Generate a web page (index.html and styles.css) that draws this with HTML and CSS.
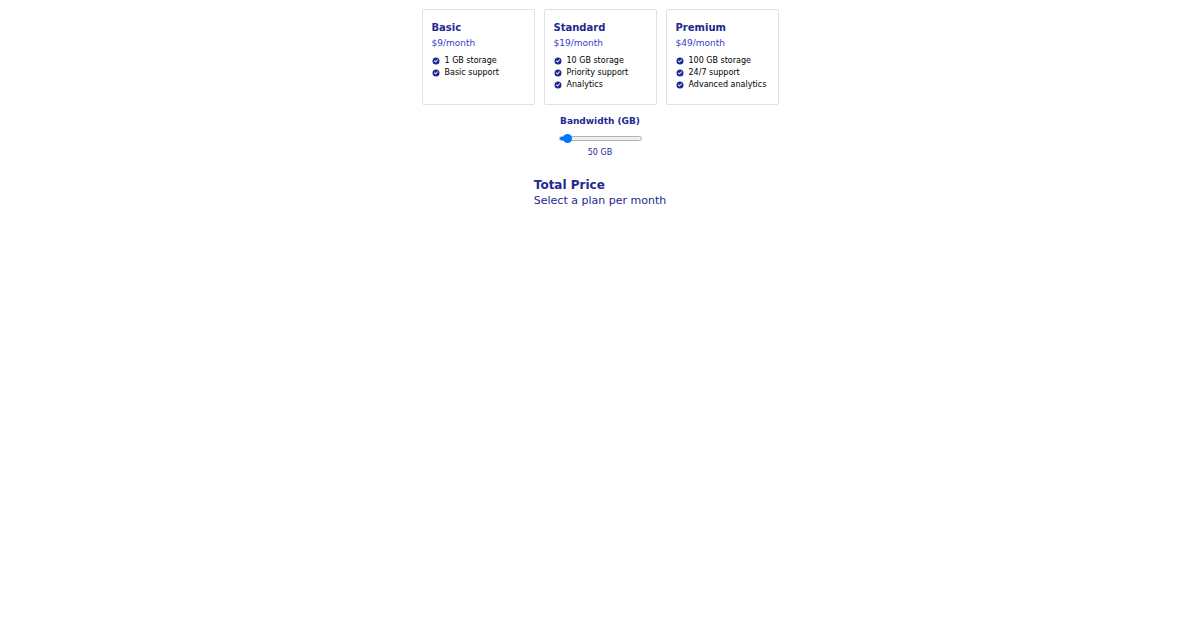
FILE: index.html
```html
<!DOCTYPE html>
<html lang="en">
<head>
    <meta charset="UTF-8">
    <meta name="viewport" content="width=device-width, initial-scale=1.0">
    <title>Pricing</title>
    <link rel="stylesheet" href="styles.css">
</head>
<body>

<svg class="sprite" aria-hidden="true">
    <symbol id="check" viewBox="0 0 16 16">
        <path fill-rule="evenodd" d="M15 8A7 7 0 1 1 1 8a7 7 0 0 1 14 0zm-3.200-1.800a.8.8 0 0 0-1.200-1.200L7 8.700 5.500 7.200a.8.8 0 0 0-1.200 1.200l2.100 2.100a.9.9 0 0 0 1.200 0z"/>
    </symbol>
</svg>

<main class="container">
    <div class="plans">
        <div class="plan">
            <h2>Basic</h2>
            <p class="price">$9/month</p>
            <ul>
                <li><svg><use href="#check"/></svg>1 GB storage</li>
                <li><svg><use href="#check"/></svg>Basic support</li>
            </ul>
        </div>
        <div class="plan">
            <h2>Standard</h2>
            <p class="price">$19/month</p>
            <ul>
                <li><svg><use href="#check"/></svg>10 GB storage</li>
                <li><svg><use href="#check"/></svg>Priority support</li>
                <li><svg><use href="#check"/></svg>Analytics</li>
            </ul>
        </div>
        <div class="plan">
            <h2>Premium</h2>
            <p class="price">$49/month</p>
            <ul>
                <li><svg><use href="#check"/></svg>100 GB storage</li>
                <li><svg><use href="#check"/></svg>24/7 support</li>
                <li><svg><use href="#check"/></svg>Advanced analytics</li>
            </ul>
        </div>
    </div>

    <div class="bandwidth">
        <label for="bandwidth">Bandwidth (GB)</label>
        <input type="range" id="bandwidth" min="0" max="1000" value="50">
        <output id="amount" for="bandwidth">50 GB</output>
    </div>

    <div class="total">
        <h2>Total Price</h2>
        <p>Select a plan per month</p>
    </div>
</main>

<script>
    let slider = document.getElementById("bandwidth");
    let amount = document.getElementById("amount");

    // The filled part of the track follows the thumb
    function update() {
        slider.style.setProperty("--fill", slider.value / slider.max * 100 + "%");
        amount.textContent = slider.value + " GB";
    }

    slider.addEventListener("input", update);
    update();
</script>

</body>
</html>
```

FILE: styles.css
```css
* {
    box-sizing: border-box;
    margin: 0;
    padding: 0;
}
body {
    font-family: "DejaVu Sans", sans-serif;
    background-color: white;
    color: #232891;
}
.sprite {
    display: none;
}
.container {
    display: flex;
    flex-direction: column;
    align-items: center;
    padding: 9px;
}
.plans {
    display: grid;
    grid-template-columns: repeat(3, 1fr);
    gap: 9px;
}
.plan {
    min-width: 113px;
    border: 1px solid #dfe0e8;
    border-radius: 2px;
    padding: 9px 9px 13px;
}
.plan h2 {
    font-size: 10px;
    line-height: 18px;
}
.price {
    color: #383dc4;
    font-size: 9px;
    line-height: 12px;
}
ul {
    list-style: none;
    margin-top: 6px;
}
li {
    display: flex;
    align-items: center;
    color: black;
    font-size: 8px;
    line-height: 12px;
}
li svg {
    width: 8px;
    height: 8px;
    margin-right: 5px;
    fill: #232891;
}
.bandwidth {
    display: flex;
    flex-direction: column;
    align-items: center;
    margin-top: 9px;
}
.bandwidth label {
    font-size: 9px;
    font-weight: bold;
    line-height: 14px;
}
.bandwidth input {
    appearance: none;
    width: 83px;
    height: 9px;
    margin: 6px 0 4px;
    background: none;
}
.bandwidth input::-webkit-slider-runnable-track {
    height: 5px;
    border: 1px solid #b2b2b2;
    border-radius: 3px;
    background: linear-gradient(to right, #0075ff var(--fill), #efefef var(--fill));
}
.bandwidth input::-webkit-slider-thumb {
    appearance: none;
    width: 9px;
    height: 9px;
    margin-top: -3px;
    border-radius: 50%;
    background: #0075ff;
}
.bandwidth output {
    font-size: 8px;
    line-height: 12px;
}
.total {
    margin-top: 18px;
}
.total h2 {
    font-size: 12px;
    line-height: 16px;
}
.total p {
    font-size: 11px;
    line-height: 16px;
}
```
